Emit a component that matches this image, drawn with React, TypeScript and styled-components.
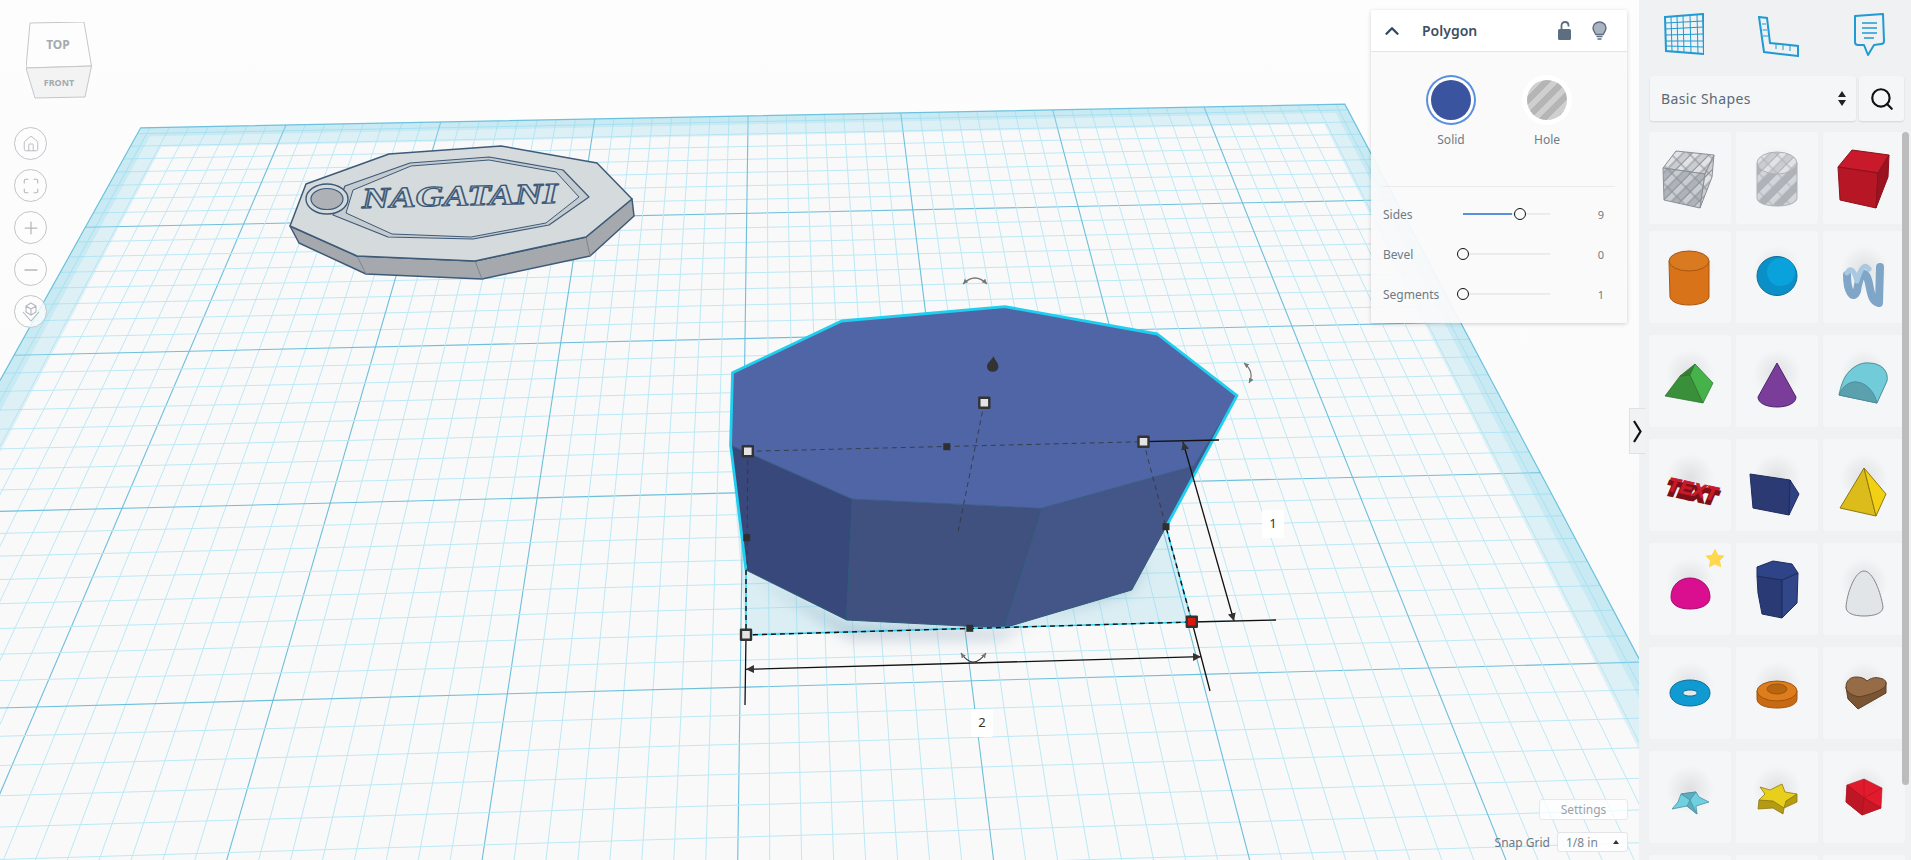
import React from "react";
import styled, { createGlobalStyle } from "styled-components";
import { ChevronUp, Home, Maximize, Minus, Plus, Search } from "lucide-react";

type Pt = [number, number];

// plane coords are inches, fitted from four grid crossings in the view
const planeMap = (() => {
  const [x0, y0] = [286, 125];
  const [x1, y1] = [1204, 107];
  const [x2, y2] = [1429, 668];
  const [x3, y3] = [37, 707];
  const dx1 = x1 - x2;
  const dx2 = x3 - x2;
  const dx3 = x0 - x1 + x2 - x3;
  const dy1 = y1 - y2;
  const dy2 = y3 - y2;
  const dy3 = y0 - y1 + y2 - y3;
  const den = dx1 * dy2 - dx2 * dy1;
  const g = (dx3 * dy2 - dx2 * dy3) / den;
  const h = (dx1 * dy3 - dx3 * dy1) / den;
  const a = x1 - x0 + g * x1;
  const b = x3 - x0 + h * x3;
  const d = y1 - y0 + g * y1;
  const e = y3 - y0 + h * y3;
  return (u: number, v: number): Pt => {
    const s = (u - 1) / 6;
    const t = (v - 0.065) / 3.935;
    const w = g * s + h * t + 1;
    return [(a * s + b * t + x0) / w, (d * s + e * t + y0) / w];
  };
})();

const LOW = 0.065;
const HIGH = 7.935;

const ring = (inset: number) => {
  const lo = LOW + inset;
  const hi = HIGH - inset;
  const pts = [planeMap(lo, lo), planeMap(hi, lo), planeMap(hi, hi), planeMap(lo, hi)];
  return "M" + pts.map((p) => p.map((n) => n.toFixed(1)).join(" ")).join("L") + "Z";
};

const gridSteps = Array.from({ length: 63 }, (_, i) => (i + 1) / 8);

const PlaneGrid = () => (
  <g>
    <path d={ring(0)} fill="#f9f9f9" />
    {gridSteps.map((n) => {
      const major = Number.isInteger(n);
      const [ax, ay] = planeMap(n, LOW);
      const [bx, by] = planeMap(n, HIGH);
      const [cx, cy] = planeMap(LOW, n);
      const [dx, dy] = planeMap(HIGH, n);
      const stroke = major ? "#6dbfdc" : "#bce9f6";
      const width = major ? 1.1 : 1;
      return (
        <g key={n} stroke={stroke} strokeWidth={width}>
          <line x1={ax} y1={ay} x2={bx} y2={by} />
          <line x1={cx} y1={cy} x2={dx} y2={dy} />
        </g>
      );
    })}
    <path d={ring(0) + ring(0.09)} fillRule="evenodd" fill="#8fd6ec" opacity="0.45" />
    <path d={ring(0.09) + ring(0.2)} fillRule="evenodd" fill="#a6e0f1" opacity="0.35" />
    <path d={ring(0)} fill="none" stroke="#6cc1dd" strokeWidth="1.2" />
  </g>
);

const KeyTag = () => (
  <g strokeLinejoin="round">
    <path
      d="M290 226L299 243L366 274L482 279L590 256L634 216L632 199L586 237L475 261L357 256Z"
      fill="#a5a9ad"
      stroke="#3d5a78"
      strokeWidth="1.5"
    />
    <path d="M357 256L366 274M475 261L482 279M586 237L590 256" stroke="#7d858c" fill="none" />
    <path
      d="M290 226L306 184L389 154L501 146L597 163L632 199L586 237L475 261L357 256Z"
      fill="#d5dadd"
      stroke="#3d5a78"
      strokeWidth="1.5"
    />
    <path
      d="M333 215L345 186L410 163L489 157L563 170L589 197L549 225L473 239L388 237Z"
      fill="#c5cbcf"
      stroke="#3d5a78"
      strokeWidth="1.2"
    />
    <path
      d="M346 213L353 190L411 166L489 160L556 172L579 197L546 223L471 237L392 234Z"
      fill="#d5dadd"
      stroke="#3d5a78"
      strokeWidth="1"
    />
    <ellipse cx="327" cy="199" rx="21" ry="15" fill="#d5dadd" stroke="#3d5a78" strokeWidth="1.4" />
    <ellipse cx="327" cy="199" rx="16" ry="10.5" fill="#aeb2b6" stroke="#3d5a78" strokeWidth="1.2" />
    <text
      x="362"
      y="208"
      textLength="196"
      lengthAdjust="spacingAndGlyphs"
      transform="rotate(-1.5 362 208)"
      fontFamily="'Liberation Serif', serif"
      fontStyle="italic"
      fontWeight="700"
      fontSize="29"
      fill="#d5dadd"
      stroke="#3f5a78"
      strokeWidth="1.3"
    >
      NAGATANI
    </text>
  </g>
);

const Handle = ({ at, red }: { at: Pt; red?: boolean }) => (
  <rect
    x={at[0] - 5}
    y={at[1] - 5}
    width="10"
    height="10"
    fill={red ? "#d8190f" : "#e4e4e4"}
    stroke="#333"
    strokeWidth="2.4"
  />
);

const Node = ({ at }: { at: Pt }) => (
  <rect x={at[0] - 3.5} y={at[1] - 3.5} width="7" height="7" fill="#2f2f2f" />
);

const DimLabel = ({ x, y, text }: { x: number; y: number; text: string }) => (
  <g>
    <rect x={x} y={y} width="22" height="28" rx="2" fill="#fff" />
    <text
      x={x + 11}
      y={y + 18}
      textAnchor="middle"
      fontFamily="'Noto Sans', sans-serif"
      fontSize="13"
      fill="#333"
    >
      {text}
    </text>
  </g>
);

const SelectedPolygon = () => (
  <g strokeLinejoin="round">
    <defs>
      <marker id="tip" markerUnits="userSpaceOnUse" markerWidth="9" markerHeight="9" refX="8" refY="4" orient="auto-start-reverse">
        <path d="M0 0L8 4L0 8Z" fill="#333" />
      </marker>
      <marker id="tipGrey" markerUnits="userSpaceOnUse" markerWidth="6" markerHeight="6" refX="5" refY="2.500" orient="auto-start-reverse">
        <path d="M0 0L5 2.500L0 5Z" fill="#777" />
      </marker>
      <filter id="soft" x="-20%" y="-20%" width="140%" height="140%">
        <feGaussianBlur stdDeviation="7" />
      </filter>
    </defs>
    <path d="M746 635L1192 622L1160 500L735 500Z" fill="#8fd3ea" opacity="0.28" />
    <path d="M746 572L846 622L1003 630L1132 592L1150 560L1000 640L850 640Z" fill="#7f9fb5" opacity="0.4" filter="url(#soft)" />

    <path d="M730.6 445L746 570L846.6 620L852.3 499Z" fill="#39487a" stroke="#2f5a78" strokeWidth="1" />
    <path d="M852.3 499L846.6 620L1003.5 628L1041.4 508.3Z" fill="#405180" stroke="#2f5a78" strokeWidth="1" />
    <path d="M1041.4 508.3L1003.5 628L1131.7 590L1237 395.7L1193.7 466Z" fill="#445587" stroke="#2f5a78" strokeWidth="1" />
    <path
      d="M730.6 445L732.5 372.7L841.6 321L1005 306.7L1157.3 334L1237 395.7L1193.7 466L1041.4 508.3L852.3 499Z"
      fill="#4f65a5"
      stroke="#3d5f8c"
      strokeWidth="1"
    />
    <path
      d="M746 570L730.6 445L732.5 372.7L841.6 321L1005 306.7L1157.3 334L1237 395.7L1166 527"
      fill="none"
      stroke="#1fcff0"
      strokeWidth="2.8"
    />

    <g fill="none" stroke="#333" strokeWidth="1" strokeDasharray="5 4" opacity="0.8">
      <path d="M747.8 451.3L1143.5 441.7M984.3 402.7L958 532M747.8 451.3L747 570M1143.5 441.7L1166 527" />
    </g>
    <g fill="none" stroke="#1fcff0" strokeWidth="1.4">
      <path d="M746 570L746 635L1192 622L1166 527" />
    </g>
    <g fill="none" stroke="#111" strokeWidth="1.4" strokeDasharray="5 4">
      <path d="M746 570L746 635L1192 622L1166 527" />
    </g>

    <g stroke="#111" strokeWidth="1.3" fill="none">
      <path d="M1143.5 441.7L1219 440M1192 622L1276 620M746 635L745 705M1192 622L1210 691" />
      <path d="M1183 442L1234 621" markerStart="url(#tip)" markerEnd="url(#tip)" />
      <path d="M746 669.3L1201 656.7" markerStart="url(#tip)" markerEnd="url(#tip)" />
    </g>

    <g fill="none" stroke="#777" strokeWidth="1.2">
      <path d="M963 284Q975 272 987 284" markerStart="url(#tipGrey)" markerEnd="url(#tipGrey)" />
      <path d="M1244 363Q1255 372 1249 383" markerStart="url(#tipGrey)" markerEnd="url(#tipGrey)" />
    </g>
    <path d="M961 653Q973 671 986 653" fill="none" stroke="#333" strokeWidth="1.2" markerStart="url(#tipGrey)" markerEnd="url(#tipGrey)" />

    <path d="M993.5 356C992 360 987 362 987 367A5.7 4.8 0 0 0 998.4 367C998.4 362 994.5 360 993.5 356Z" fill="#333" />

    <Handle at={[984.3, 402.7]} />
    <Handle at={[747.8, 451.3]} />
    <Handle at={[1143.5, 441.7]} />
    <Handle at={[746, 634.7]} />
    <Handle at={[1191.8, 621.7]} red />
    <Node at={[946.8, 446.7]} />
    <Node at={[746.7, 537.7]} />
    <Node at={[1166, 526.7]} />
    <Node at={[969.8, 628.3]} />

    <DimLabel x={1262} y={510} text="1" />
    <DimLabel x={971} y={709} text="2" />
  </g>
);

const Stripes = ({ id, light, dark }: { id: string; light: string; dark: string }) => (
  <pattern id={id} width="13" height="13" patternUnits="userSpaceOnUse" patternTransform="rotate(45)">
    <rect width="13" height="13" fill={light} />
    <rect width="6.500" height="13" fill={dark} />
  </pattern>
);

const shapes: React.ReactNode[] = [
  <g key="box-hole" stroke="#8b8f96" strokeLinejoin="round">
    <defs>
      <Stripes id="boxFront" light="#c9ccd1" dark="#aeb2b9" />
      <Stripes id="boxTop" light="#e0e2e6" dark="#c9ccd1" />
    </defs>
    <path d="M14 36L27 19L65 23L56 42Z" fill="url(#boxTop)" />
    <path d="M14 36L56 42L51 76L15 68Z" fill="url(#boxFront)" />
    <path d="M56 42L65 23L63 45L51 76Z" fill="url(#boxTop)" />
  </g>,
  <g key="cyl-hole" stroke="#aeb1b6">
    <defs>
      <Stripes id="cylFront" light="#d2d5d9" dark="#aeb2b9" />
      <Stripes id="cylTop" light="#e0e2e6" dark="#c9ccd1" />
    </defs>
    <path d="M21 31V66C21 71 30 74 41 74S61 71 61 66V31Z" fill="url(#cylFront)" />
    <ellipse cx="41" cy="31" rx="20" ry="11" fill="url(#cylTop)" />
  </g>,
  <g key="box" strokeLinejoin="round" stroke="#8d101c">
    <path d="M15 35L29 18L66 23L55 41Z" fill="#c81a2b" />
    <path d="M15 35L55 41L53 76L17 68Z" fill="#b71624" />
    <path d="M55 41L66 23L65 45L53 76Z" fill="#991320" />
  </g>,
  <g key="cylinder" stroke="#a9560f">
    <path d="M20 30L21 66C22 71 30 74 40 74S59 71 60 66L60 30Z" fill="#d9731a" />
    <ellipse cx="40" cy="30" rx="20" ry="10" fill="#d97a20" />
  </g>,
  <g key="sphere">
    <ellipse cx="41" cy="45" rx="20" ry="19.5" fill="#0a8fc6" stroke="#0b6f99" />
    <ellipse cx="45" cy="41" rx="14" ry="14" fill="#0aa2dc" />
  </g>,
  <g key="scribble" fill="none" strokeLinecap="round" strokeLinejoin="round">
    <path d="M24 44C24 60 30 70 34 60C36 46 40 38 44 46S46 70 56 72L57 36" stroke="#7fa6c6" strokeWidth="8" />
    <path d="M24 42C28 34 32 42 34 50C38 36 42 32 46 38" stroke="#a9c9e2" strokeWidth="5" />
  </g>,
  <g key="roof" stroke="#2b6e2b" strokeWidth="0.7" strokeLinejoin="round">
    <path d="M16 61L31 41L41 40L54 68Z" fill="#3a8f3a" />
    <path d="M31 41L46 29L41 40Z" fill="#357f35" />
    <path d="M46 29L64 48L54 68L41 40Z" fill="#45b24a" />
  </g>,
  <g key="cone" stroke="#4c2570">
    <path d="M41 28L22 62C22 68 30 72 41 72S60 68 60 62Z" fill="#7a3d9a" />
  </g>,
  <g key="round-roof" stroke="#4b8f9c" strokeLinejoin="round">
    <path d="M16 60C18 50 20 46 22 42C28 32 38 27 46 28C58 28 66 36 64 46L54 68Z" fill="#72cbd8" />
    <path d="M16 60C20 50 28 46 34 47C44 48 52 58 54 68Z" fill="#5aa0ad" />
  </g>,
  <g key="text" fontFamily="'Liberation Sans', sans-serif" fontWeight="700" fontStyle="italic" fontSize="19">
    <text x="17" y="55" transform="rotate(12 17 55)" textLength="50" fill="#7d0f18" stroke="#7d0f18" strokeWidth="3.500">
      TEXT
    </text>
    <text x="18" y="51" transform="rotate(12 17 51)" textLength="50" fill="#c81a28" stroke="#c81a28" strokeWidth="0.8">
      TEXT
    </text>
  </g>,
  <g key="polygon" stroke="#1f2c5c" strokeLinejoin="round">
    <path d="M14 35L54 41L53 76L17 69Z" fill="#2b3a73" />
    <path d="M54 41L63 55L53 76Z" fill="#2f4383" />
  </g>,
  <g key="pyramid" stroke="#8d7810" strokeLinejoin="round">
    <path d="M41 29L17 69L53 77Z" fill="#dcbc1b" />
    <path d="M41 29L63 55L53 77Z" fill="#f2d013" />
  </g>,
  <g key="half-sphere">
    <path d="M66 6.5L68.8 12.2L75 13.1L70.5 17.5L71.6 23.7L66 20.8L60.4 23.7L61.5 17.5L57 13.1L63.2 12.2Z" fill="#ffd84d" stroke="#ffd84d" strokeLinejoin="round" />
    <path d="M22 54C22 42 31 35 41 35S61 42 61 54C61 62 52 66 41 66S22 62 22 54Z" fill="#d90f90" stroke="#a30d6c" />
  </g>,
  <g key="hexagon" stroke="#1f2c5c" strokeLinejoin="round">
    <path d="M21 33L46 37L46 75L26 71L22 50Z" fill="#2a3a75" />
    <path d="M46 37L62 30L61 60L46 75Z" fill="#31478a" />
    <path d="M21 24L37 18L56 21L62 30L46 37L21 33Z" fill="#2f4488" />
  </g>,
  <g key="paraboloid">
    <path d="M23 64C24 50 32 28 41 28S58 50 60 64C60 70 52 73 41 73S23 70 23 64Z" fill="#e2e5e7" stroke="#83888c" />
  </g>,
  <g key="torus">
    <path d="M21 46C21 38 30 33 41 33S61 38 61 46S52 59 41 59S21 54 21 46ZM34 46C34 48 37 49 41 49S48 48 48 46S45 43 41 43S34 44 34 46Z" fillRule="evenodd" fill="#0f9bd1" stroke="#0b6f99" />
  </g>,
  <g key="tube" stroke="#9c560f">
    <path d="M21 44V52C21 58 30 61 41 61S61 58 61 52V44Z" fill="#c96a12" />
    <ellipse cx="41" cy="44" rx="20" ry="10" fill="#df7c1c" />
    <ellipse cx="41" cy="42" rx="10" ry="5" fill="#b8650f" />
  </g>,
  <g key="heart" stroke="#5c3f25" strokeLinejoin="round">
    <path d="M23 40L25 52L35 62L63 46V35L35 50Z" fill="#7a5433" />
    <path d="M23 40C23 33 28 30 33 30C38 30 41 31 44 34C48 31 52 30 56 31C61 32 63 33 63 37C63 42 50 47 36 50C28 48 23 45 23 40Z" fill="#966c47" />
  </g>,
  <g key="star-flat" stroke="#4e8fa0" strokeWidth="0.8" strokeLinejoin="round">
    <path d="M23 58L29 51L32 43L39 42L47 41L50 46L60 51L47 55L48 63L38 55Z" fill="#6fd0e0" />
    <path d="M41 49L47 41L39 42L32 43ZM41 49L48 63L38 55Z" fill="#5aaebf" />
  </g>,
  <g key="star" stroke="#8d7810" strokeWidth="0.8" strokeLinejoin="round">
    <path d="M23 49L22 58L37 57L47 63L48 57L61 51V43L50 50L37 50Z" fill="#b59b12" />
    <path d="M24 36L34 39L46 33L49 41L61 43L50 50L48 57L37 50L23 49L29 43Z" fill="#e8cf1c" />
  </g>,
  <g key="polyhedron" stroke="#a81420" strokeWidth="0.6" strokeLinejoin="round">
    <path d="M24 34L41 28L59 37L58 57L39 64L23 51Z" fill="#e21a2d" />
    <path d="M24 34L41 47L39 64L23 51Z" fill="#bd1624" />
    <path d="M39 64L41 47L58 57Z" fill="#c71726" />
    <path d="M41 28L41 47M24 34L41 47L59 37M41 47L58 57" fill="none" />
  </g>,
  <g key="blank-a" />,
  <g key="blank-b" />,
  <g key="blank-c" />,
];

const App = () => (
  <Page>
    <GlobalStyle />
    <Viewport>
      <SceneSvg viewBox="0 0 1639 860">
        <PlaneGrid />
        <KeyTag />
        <SelectedPolygon />
      </SceneSvg>

      <NavColumn>
        <NavCube viewBox="0 0 70 80">
          <path d="M4 1L58 0L65.500 44L0 46Z" fill="#fdfdfd" stroke="#c4c7ca" />
          <path d="M0 46L65.500 44L59 75L9 76Z" fill="#f3f3f4" stroke="#c4c7ca" />
          <text x="32" y="27" textAnchor="middle" fontFamily="'Noto Sans', sans-serif" fontWeight="700" fontSize="12" fill="#a6a9ae">
            TOP
          </text>
          <text x="33" y="64" textAnchor="middle" fontFamily="'Noto Sans', sans-serif" fontWeight="700" fontSize="9" fill="#a6a9ae">
            FRONT
          </text>
        </NavCube>
        <NavButtons>
          <RoundButton>
            <Home size={18} strokeWidth={1.2} />
          </RoundButton>
          <RoundButton>
            <Maximize size={18} strokeWidth={1.5} />
          </RoundButton>
          <RoundButton>
            <Plus size={20} strokeWidth={1.5} />
          </RoundButton>
          <RoundButton>
            <Minus size={20} strokeWidth={2} />
          </RoundButton>
          <RoundButton>
            <svg width="20" height="22" viewBox="0 0 20 22" fill="none" stroke="currentColor" strokeWidth="1.1">
              <path d="M10 2L15 5V11L10 14L5 11V5ZM5 5L10 8L15 5M10 8V14" />
              <path d="M2 11L10 20L18 11" />
            </svg>
          </RoundButton>
        </NavButtons>
      </NavColumn>

      <Inspector>
        <InspectorHead>
          <ChevronUp size={22} strokeWidth={2.6} color="#34495e" />
          <InspectorTitle>Polygon</InspectorTitle>
          <HeadIcons>
            <svg width="14" height="19" viewBox="0 0 14 19">
              <rect x="0" y="8" width="13" height="11" rx="1.5" fill="#5d6e80" />
              <path d="M3.500 8V4.500C3.500 2.500 5 1 7 1S10.500 2.500 10.500 4.500V5.500" fill="none" stroke="#5d6e80" strokeWidth="1.8" />
            </svg>
            <svg width="15" height="20" viewBox="0 0 15 20">
              <path d="M7.500 1C3.800 1 1 3.700 1 7C1 9.500 2.800 11 3.800 13.500H11.200C12.200 11 14 9.500 14 7C14 3.700 11.200 1 7.500 1Z" fill="#a9b4bf" stroke="#5d6e80" strokeWidth="1.4" />
              <path d="M4.500 15.500H10.500M5.500 18H9.500" stroke="#5d6e80" strokeWidth="1.6" />
            </svg>
          </HeadIcons>
        </InspectorHead>
        <ModeRow>
          <ModeOption>
            <SolidSwatch />
            <ModeLabel>Solid</ModeLabel>
          </ModeOption>
          <ModeOption>
            <HoleSwatch />
            <ModeLabel>Hole</ModeLabel>
          </ModeOption>
        </ModeRow>
        <Params>
          <ParamRow>
            <ParamName>Sides</ParamName>
            <Track>
              <TrackFill $pct={56} />
              <Thumb $pct={65} />
            </Track>
            <ParamValue>9</ParamValue>
          </ParamRow>
          <ParamRow>
            <ParamName>Bevel</ParamName>
            <Track>
              <Thumb $pct={0} />
            </Track>
            <ParamValue>0</ParamValue>
          </ParamRow>
          <ParamRow>
            <ParamName>Segments</ParamName>
            <Track>
              <Thumb $pct={0} />
            </Track>
            <ParamValue>1</ParamValue>
          </ParamRow>
        </Params>
      </Inspector>

      <GridControls>
        <SettingsButton>Settings</SettingsButton>
        <SnapRow>
          <SnapLabel>Snap Grid</SnapLabel>
          <SnapSelect>
            1/8 in
            <Caret />
          </SnapSelect>
        </SnapRow>
      </GridControls>

      <CollapseTab>
        <svg width="9" height="23" viewBox="0 0 9 23" fill="none" stroke="#111" strokeWidth="2.2">
          <path d="M1 1L7.500 11.500L1 22" />
        </svg>
      </CollapseTab>
    </Viewport>

    <Sidebar>
      <ToolIcons>
        <svg width="40" height="42" viewBox="0 0 40 42" fill="none" stroke="#1f9ad2">
          <path d="M1 4L39 1L40 41L2 38Z" strokeWidth="2" />
          <path d="M7 3.500L8 38.500M13 3L14 39M19 2.500L20 39.500M26 2L27 40M33 1.500L34 40.500M1.500 10L39 8M1.500 16L39.500 14M2 22L40 21M2 28L40 28M2 33L40 34" strokeWidth="1" />
        </svg>
        <RulerIcon width="41" height="41" viewBox="0 0 41 41" fill="none" stroke="#1f9ad2" strokeWidth="2">
          <path d="M1 1L9 2L12 27L40 30V40L6 36Z" />
          <path d="M4 8H8M4.500 14H9M5 20H10M18 28V33M25 29V34M32 30V35" strokeWidth="1" />
        </RulerIcon>
        <svg width="32" height="43" viewBox="0 0 32 43" fill="none" stroke="#1f9ad2" strokeWidth="2">
          <path d="M2 3L30 1L31 28C31 30 30 31 28 31L21 32L15 42L11 32L5 32C3 32 2 31 2 29Z" strokeLinejoin="round" />
          <path d="M9 10H24M9 15H24M9 20H24M11 25H21" strokeWidth="1.4" />
        </svg>
      </ToolIcons>
      <LibraryBar>
        <LibrarySelect>
          Basic Shapes
          <svg width="8" height="15" viewBox="0 0 8 15" fill="#222">
            <path d="M0 6L4 0L8 6ZM0 9L4 15L8 9Z" />
          </svg>
        </LibrarySelect>
        <SearchButton>
          <Search size={26} strokeWidth={2} color="#111" />
        </SearchButton>
      </LibraryBar>
      <ShapeGrid>
        {shapes.map((shape, i) => (
          <ShapeCard key={i}>
            <svg width="82" height="92" viewBox="0 0 82 92">
              {shape}
            </svg>
          </ShapeCard>
        ))}
      </ShapeGrid>
      <ScrollThumb />
    </Sidebar>
  </Page>
);

const GlobalStyle = createGlobalStyle`
  html, body {
    margin: 0;
    height: 100%;
    overflow: hidden;
    font-family: "Noto Sans", sans-serif;
  }
`;

const Page = styled.div`
  display: flex;
  width: 1911px;
  height: 860px;
  overflow: hidden;
`;

const Viewport = styled.div`
  position: relative;
  flex: 1;
  background: linear-gradient(#fdfdfd, #f9f9f9);
`;

const SceneSvg = styled.svg`
  display: block;
  width: 100%;
  height: 100%;
`;

const NavColumn = styled.div`
  position: absolute;
  top: 22px;
  left: 14px;
  display: flex;
  flex-direction: column;
  gap: 29px;
`;

const NavCube = styled.svg`
  width: 70px;
  height: 80px;
  margin-left: 12px;
`;

const NavButtons = styled.div`
  display: flex;
  flex-direction: column;
  gap: 9px;
  margin-top: -4px;
`;

const RoundButton = styled.div`
  width: 33px;
  height: 33px;
  box-sizing: border-box;
  border: 1px solid #c2c5c9;
  border-radius: 50%;
  background: rgba(253, 253, 253, 0.8);
  color: #b4b8bd;
  display: flex;
  align-items: center;
  justify-content: center;
`;

const Inspector = styled.section`
  position: absolute;
  top: 10px;
  right: 12px;
  width: 256px;
  height: 313px;
  background: rgba(250, 250, 250, 0.93);
  border-radius: 3px;
  box-shadow: 0 1px 4px rgba(0, 0, 0, 0.18);
`;

const InspectorHead = styled.header`
  display: flex;
  align-items: center;
  height: 41px;
  padding: 0 20px 0 10px;
  background: #fff;
  border-bottom: 1px solid #e2e4e8;
  border-radius: 3px 3px 0 0;
`;

const InspectorTitle = styled.span`
  margin-left: 19px;
  font-size: 14px;
  font-weight: 600;
  color: #3d4f61;
`;

const HeadIcons = styled.div`
  display: flex;
  align-items: center;
  gap: 20px;
  margin-left: auto;
`;

const ModeRow = styled.div`
  display: flex;
  justify-content: center;
  padding-top: 24px;
  height: 134px;
  box-sizing: border-box;
`;

const ModeOption = styled.div`
  display: flex;
  flex-direction: column;
  align-items: center;
  width: 96px;
`;

const SolidSwatch = styled.div`
  width: 40px;
  height: 40px;
  border-radius: 50%;
  margin: 4px 0;
  background: #3b54a0;
  box-shadow: 0 0 0 3px #fff, 0 0 0 5px #5b8fdc;
`;

const HoleSwatch = styled.div`
  width: 40px;
  height: 40px;
  border-radius: 50%;
  margin: 4px 0;
  background: repeating-linear-gradient(135deg, #b5b5b5 0 6px, #cfcfcf 6px 12px);
  box-shadow: 0 0 0 5px #fff;
`;

const ModeLabel = styled.span`
  margin-top: 7px;
  font-size: 12px;
  color: #6f7a86;
`;

const Params = styled.div`
  margin: 0 12px;
  padding-top: 7px;
  border-top: 1px solid #e9ebed;
`;

const ParamRow = styled.div`
  display: grid;
  grid-template-columns: 80px 87px 1fr;
  align-items: center;
  height: 40px;
`;

const ParamName = styled.span`
  font-size: 12px;
  color: #6f7a86;
`;

const ParamValue = styled.span`
  font-size: 11px;
  color: #6f7a86;
  text-align: right;
  padding-right: 11px;
`;

const Track = styled.div`
  position: relative;
  height: 2px;
  background: #ececee;
`;

const TrackFill = styled.div<{ $pct: number }>`
  width: ${(p) => p.$pct}%;
  height: 100%;
  background: #5b8fdc;
`;

const Thumb = styled.div<{ $pct: number }>`
  position: absolute;
  top: -5px;
  left: ${(p) => p.$pct}%;
  width: 12px;
  height: 12px;
  box-sizing: border-box;
  transform: translateX(-50%);
  border: 1.5px solid #111;
  border-radius: 50%;
  background: #fafafa;
`;

const GridControls = styled.div`
  position: absolute;
  right: 11px;
  bottom: 8px;
  display: flex;
  flex-direction: column;
  align-items: flex-end;
  gap: 12px;
`;

const SettingsButton = styled.div`
  width: 89px;
  height: 21px;
  box-sizing: border-box;
  border: 1px solid #e6e8ea;
  border-radius: 3px;
  background: rgba(255, 255, 255, 0.75);
  font-size: 12px;
  line-height: 19px;
  text-align: center;
  color: #9aa3ad;
`;

const SnapRow = styled.div`
  display: flex;
  align-items: center;
  gap: 7px;
`;

const SnapLabel = styled.span`
  font-size: 12px;
  color: #6b7886;
`;

const SnapSelect = styled.div`
  display: flex;
  align-items: center;
  justify-content: space-between;
  width: 71px;
  height: 20px;
  box-sizing: border-box;
  padding: 0 8px;
  border: 1px solid #e2e4e7;
  border-radius: 3px;
  background: rgba(255, 255, 255, 0.85);
  font-size: 12px;
  color: #7a8490;
`;

const Caret = styled.span`
  width: 0;
  height: 0;
  border-left: 3px solid transparent;
  border-right: 3px solid transparent;
  border-bottom: 4px solid #333;
`;

const CollapseTab = styled.div`
  position: absolute;
  top: 408px;
  right: -6px;
  z-index: 2;
  width: 16px;
  height: 46px;
  box-sizing: border-box;
  border: 1px solid #dfe1e4;
  border-right: none;
  background: #f1f2f4;
  display: flex;
  align-items: center;
  justify-content: center;
`;

const Sidebar = styled.aside`
  position: relative;
  flex: 0 0 272px;
  height: 860px;
  overflow: hidden;
  background: #f0f1f3;
`;

const ToolIcons = styled.div`
  display: flex;
  justify-content: space-between;
  align-items: flex-start;
  height: 50px;
  padding: 13px 26px 0 25px;
`;

const RulerIcon = styled.svg`
  margin-top: 3px;
`;

const LibraryBar = styled.div`
  display: flex;
  gap: 3px;
  padding: 13px 7px 0 11px;
`;

const LibrarySelect = styled.div`
  display: flex;
  align-items: center;
  justify-content: space-between;
  width: 206px;
  height: 45px;
  box-sizing: border-box;
  padding: 0 10px 0 11px;
  background: #f5f6f8;
  border-radius: 3px;
  box-shadow: 0 1px 2px rgba(0, 0, 0, 0.12);
  font-size: 14px;
  letter-spacing: 0.4px;
  color: #5c6875;
`;

const SearchButton = styled.div`
  display: flex;
  align-items: center;
  justify-content: center;
  width: 45px;
  height: 45px;
  background: #f5f6f8;
  border-radius: 3px;
  box-shadow: 0 1px 2px rgba(0, 0, 0, 0.12);
`;

const ShapeGrid = styled.div`
  display: grid;
  grid-template-columns: repeat(3, 82px);
  grid-template-rows: 87px repeat(7, 92px);
  column-gap: 5px;
  row-gap: 12px;
  margin: 11px 0 0 10px;
`;

const ShapeCard = styled.div`
  width: 82px;
  height: 92px;
  border-radius: 3px;
  background: radial-gradient(circle at 50% 42%, rgba(0, 0, 0, 0.09), rgba(0, 0, 0, 0) 36%), #f5f6f8;

  svg {
    display: block;
  }
`;

const ScrollThumb = styled.div`
  position: absolute;
  top: 132px;
  right: 2px;
  width: 7px;
  height: 653px;
  border-radius: 4px;
  background: #bcbcbc;
`;

export default App;
